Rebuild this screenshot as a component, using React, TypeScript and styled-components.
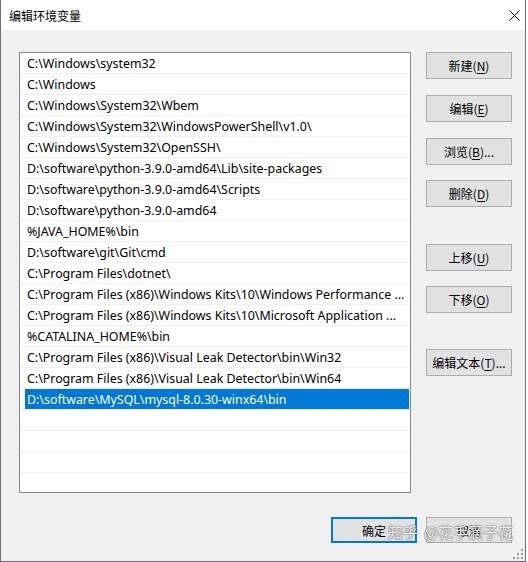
import React from 'react'
import styled, { createGlobalStyle } from 'styled-components'

const GlobalStyle = createGlobalStyle`
  html, body {
    margin: 0;
    background: #ffffff;
  }
  body {
    font-family: 'Noto Sans', 'Noto Sans CJK SC', sans-serif;
    font-size: 12px;
    color: #000;
  }
`

const UI_FONT = `'Noto Sans', 'Noto Sans CJK SC', sans-serif`

const Window = styled.div`
  position: relative;
  box-sizing: border-box;
  width: 526px;
  height: 562px;
  display: flex;
  flex-direction: column;
  background: #f0f0f0;
  border-left: 1px solid #707070;
  border-right: 1px solid #707070;
  border-bottom: 1px solid #707070;
`

const TitleBar = styled.div`
  height: 30px;
  flex: none;
  display: flex;
  align-items: center;
  justify-content: space-between;
  background: #ffffff;
  padding-left: 8px;
`

const Title = styled.span`
  font-family: 'Noto Sans CJK SC', sans-serif;
  font-size: 12px;
  color: #000;
`

const CloseButton = styled.div`
  width: 46px;
  height: 30px;
  display: flex;
  align-items: center;
  justify-content: center;
  margin-right: -12px;
`

const Body = styled.div`
  display: grid;
  grid-template-columns: 392px 86px;
  column-gap: 15px;
  padding: 22px 0 0 18px;
`

const ListBox = styled.div`
  box-sizing: border-box;
  height: 441px;
  border: 1px solid #828790;
  background: #ffffff;
  overflow: hidden;
`

const Row = styled.div`
  height: 20px;
  border-bottom: 1px solid #f0f0f0;
  padding: 0 1px 0 5px;
`

const Cell = styled.div<{ $selected?: boolean }>`
  height: 20px;
  line-height: 21px;
  padding-left: 2px;
  white-space: nowrap;
  overflow: hidden;
  font-family: ${UI_FONT};
  font-size: 12.4px;
  background: ${(p) => (p.$selected ? '#0078d7' : 'transparent')};
  color: ${(p) => (p.$selected ? '#ffffff' : '#000000')};
`

const SideButtons = styled.div`
  display: flex;
  flex-direction: column;
`

const Button = styled.button<{ $gap?: number; $default?: boolean }>`
  box-sizing: border-box;
  width: 86px;
  height: 27px;
  margin-top: ${(p) => p.$gap ?? 0}px;
  padding: 0;
  background: #e1e1e1;
  border: ${(p) => (p.$default ? '2px solid #0078d7' : '1px solid #adadad')};
  border-radius: 0;
  font-family: 'Noto Sans CJK SC', ${UI_FONT};
  font-size: 12px;
  color: #000;
  cursor: default;

  u {
    text-underline-offset: 2px;
  }
`

const Footer = styled.div`
  display: flex;
  justify-content: flex-end;
  gap: 9px;
  padding: 24px 13px 0 0;

  ${Button} {
    height: 26px;
  }
`

const Watermark = styled.div`
  position: absolute;
  left: 387px;
  top: 521px;
  font-family: 'Noto Sans CJK SC', sans-serif;
  font-size: 15px;
  white-space: nowrap;
  color: rgba(255, 255, 255, 0.92);
  text-shadow: 0 0 1px rgba(60, 60, 60, 0.9), 0 0 2px rgba(60, 60, 60, 0.6);
  pointer-events: none;

  span {
    margin-left: 6px;
  }
`

const Grip = styled.svg`
  position: absolute;
  right: 2px;
  bottom: 2px;
`

const paths = [
  'C:\\Windows\\system32',
  'C:\\Windows',
  'C:\\Windows\\System32\\Wbem',
  'C:\\Windows\\System32\\WindowsPowerShell\\v1.0\\',
  'C:\\Windows\\System32\\OpenSSH\\',
  'D:\\software\\python-3.9.0-amd64\\Lib\\site-packages',
  'D:\\software\\python-3.9.0-amd64\\Scripts',
  'D:\\software\\python-3.9.0-amd64',
  '%JAVA_HOME%\\bin',
  'D:\\software\\git\\Git\\cmd',
  'C:\\Program Files\\dotnet\\',
  'C:\\Program Files (x86)\\Windows Kits\\10\\Windows Performance ...',
  'C:\\Program Files (x86)\\Windows Kits\\10\\Microsoft Application ...',
  '%CATALINA_HOME%\\bin',
  'C:\\Program Files (x86)\\Visual Leak Detector\\bin\\Win32',
  'C:\\Program Files (x86)\\Visual Leak Detector\\bin\\Win64',
  'D:\\software\\MySQL\\mysql-8.0.30-winx64\\bin',
]

const selectedIndex = paths.length - 1

const sideButtons = [
  { label: '新建', key: 'N', gap: 0 },
  { label: '编辑', key: 'E', gap: 16 },
  { label: '浏览', key: 'B', gap: 16, more: true },
  { label: '删除', key: 'D', gap: 15 },
  { label: '上移', key: 'U', gap: 37 },
  { label: '下移', key: 'O', gap: 15 },
  { label: '编辑文本', key: 'T', gap: 36, more: true },
]

export default function App() {
  return (
    <>
      <GlobalStyle />
      <Window>
        <TitleBar>
          <Title>编辑环境变量</Title>
          <CloseButton>
            <svg width="11" height="11" viewBox="0 0 11 11">
              <path d="M0.5 0.5 L10.5 10.5 M10.5 0.5 L0.5 10.5" stroke="#000" strokeWidth="1" />
            </svg>
          </CloseButton>
        </TitleBar>

        <Body>
          <ListBox>
            {paths.map((p, i) => (
              <Row key={p}>
                <Cell $selected={i === selectedIndex}>{p}</Cell>
              </Row>
            ))}
            {[0, 1, 2, 3].map((i) => (
              <Row key={`empty-${i}`}>
                <Cell />
              </Row>
            ))}
          </ListBox>

          <SideButtons>
            {sideButtons.map((b) => (
              <Button key={b.key} $gap={b.gap}>
                {b.label}(<u>{b.key}</u>){b.more ? '...' : ''}
              </Button>
            ))}
          </SideButtons>
        </Body>

        <Footer>
          <Button $default>确定</Button>
          <Button>取消</Button>
        </Footer>

        <Watermark>
          知乎<span>@花手滴子花</span>
        </Watermark>

        <Grip width="10" height="10" viewBox="0 0 10 10">
          <g fill="#a0a0a0">
            <rect x="8" y="0" width="2" height="2" />
            <rect x="4" y="4" width="2" height="2" />
            <rect x="8" y="4" width="2" height="2" />
            <rect x="0" y="8" width="2" height="2" />
            <rect x="4" y="8" width="2" height="2" />
            <rect x="8" y="8" width="2" height="2" />
          </g>
        </Grip>
      </Window>
    </>
  )
}
